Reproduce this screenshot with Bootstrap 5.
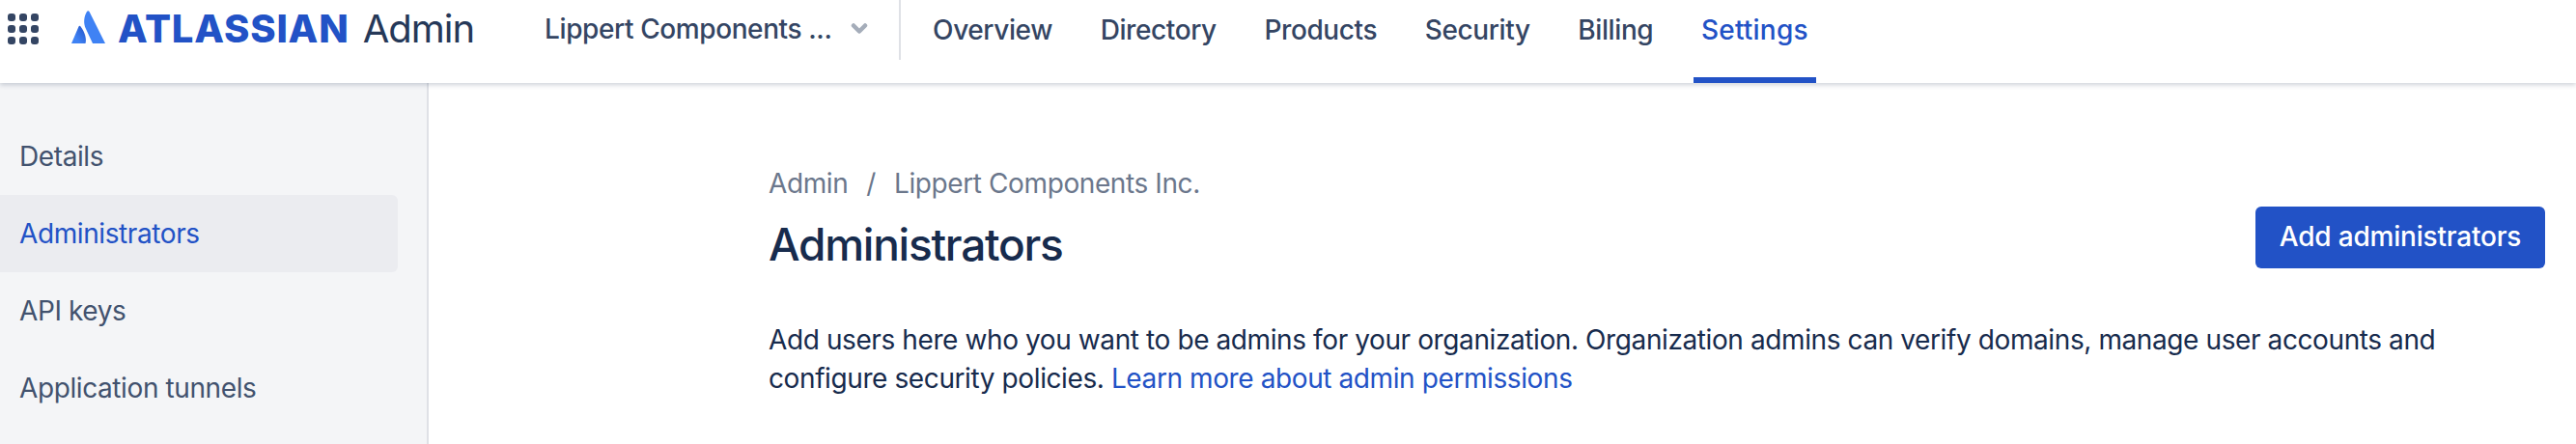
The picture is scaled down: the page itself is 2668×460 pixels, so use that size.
<!DOCTYPE html>
<html lang="en">
<head>
  <meta charset="UTF-8" />
  <meta name="viewport" content="width=device-width, initial-scale=1.0"/>
  <title>Atlassian Admin - Administrators</title>
  <link href="https://cdn.jsdelivr.net/npm/bootstrap@5.3.3/dist/css/bootstrap.min.css" rel="stylesheet">
  <style>
    html, body { height: 100%; margin: 0; overflow: hidden; }
    body { font-family: "Inter", "Liberation Sans", sans-serif; font-size: 28px; letter-spacing: -.4px; color: #172b4d; background: #fff; }

    .top-bar { height: 86px; background: #fff; box-shadow: 0 2px 5px rgba(9,30,66,.2); position: relative; z-index: 2; padding-left: 8px; }
    .brand-row { height: 62px; }
    .app-grid { width: 32px; height: 32px; margin: 0 34px 2px 0; }
    .logo-mark { width: 35px; height: 34px; margin: 0 13px 6px 0; }
    .logo-word { font-weight: 800; font-size: 40px; letter-spacing: .8px; color: #2252c6; line-height: 1; margin-bottom: 2px; }
    .logo-app { font-size: 40px; color: #253858; margin: 0 0 2px 14px; line-height: 1; letter-spacing: -1px; }
    .org-pick { margin-left: 73px; width: 369px; height: 62px; border-right: 2px solid #dfe1e6; color: #344563; font-weight: 500; padding-bottom: 2px; }
    .org-pick svg { width: 18px; height: 14px; margin-left: 19px; }
    .top-links { gap: 33.7px; margin-left: 25px; }
    .top-link { color: #344563; font-weight: 500; text-decoration: none; height: 86px; display: flex; align-items: center; padding: 0 8px 18px; border-bottom: 6px solid transparent; }
    .top-link.on { color: #2252c6; border-bottom-color: #2252c6; letter-spacing: .2px; }

    .page-body { height: calc(100% - 86px); }
    .side-col { width: 444px; background: #f4f5f7; border-right: 2px solid #dfe1e6; padding: 36px 30px 0 0; flex-shrink: 0; }
    .side-link { display: block; height: 80px; line-height: 81px; padding-left: 20px; color: #42526e; text-decoration: none; border-radius: 0 6px 6px 0; }
    .side-link.on { background: #ebecf0; color: #2252c6; }

    .main-col { padding: 84px 32px 0 352px; }
    .crumbs { --bs-breadcrumb-margin-bottom: 0; --bs-breadcrumb-item-padding-x: 19px; --bs-breadcrumb-divider-color: #6b778c; --bs-breadcrumb-item-active-color: #6b778c; line-height: 40px; }
    .crumbs a { color: #6b778c; text-decoration: none; }
    .page-title { font-size: 46px; font-weight: 500; color: #172b4d; letter-spacing: -1.25px; line-height: 56px; margin: 15px 0 0; }
    .add-btn { background: #2252c6; border: 0; color: #fff; font-weight: 500; font-size: 28px; letter-spacing: -.2px; height: 64px; width: 300px; border-radius: 6px; padding: 0 0 3px; margin-top: 44px; }
    .intro { line-height: 40px; margin: 51px 0 0; max-width: 1840px; }
    .intro a { color: #2252c6; text-decoration: none; }
  </style>
</head>
<body>

<!-- Top bar -->
<header class="top-bar d-flex align-items-start">
  <div class="brand-row d-flex align-items-center">
    <svg class="app-grid" viewBox="0 0 32 32" fill="#344563">
      <rect x="0" y="0" width="8" height="8" rx="3"/><rect x="12" y="0" width="8" height="8" rx="3"/><rect x="24" y="0" width="8" height="8" rx="3"/>
      <rect x="0" y="12" width="8" height="8" rx="3"/><rect x="12" y="12" width="8" height="8" rx="3"/><rect x="24" y="12" width="8" height="8" rx="3"/>
      <rect x="0" y="24" width="8" height="8" rx="3"/><rect x="12" y="24" width="8" height="8" rx="3"/><rect x="24" y="24" width="8" height="8" rx="3"/>
    </svg>
    <svg class="logo-mark" viewBox="0 0 35 34">
      <defs>
        <linearGradient id="logoFade" x1="0" y1="1" x2="1" y2="0">
          <stop offset="0.3" stop-color="#3f82f4"/>
          <stop offset="1" stop-color="#2252c6"/>
        </linearGradient>
      </defs>
      <path d="M9.500 16.500C9 15.500 8 15.500 7.500 16.500L0 34H14.500C16 30 14 22 9.500 16.500Z" fill="url(#logoFade)"/>
      <path d="M16 1C13 6 12 13 15 19L22 34H35L18.500 1C18 0 16.500 0 16 1Z" fill="#3f82f4"/>
    </svg>
    <span class="logo-word">ATLASSIAN</span>
    <span class="logo-app">Admin</span>
    <div class="org-pick d-flex align-items-center">
      <span>Lippert Components ...</span>
      <svg viewBox="0 0 18 14"><path d="M3 3.500l6 6 6-6" fill="none" stroke="#a5adba" stroke-width="4.500" stroke-linecap="round" stroke-linejoin="round"/></svg>
    </div>
  </div>
  <nav class="top-links d-flex">
    <a class="top-link" href="#">Overview</a>
    <a class="top-link" href="#">Directory</a>
    <a class="top-link" href="#">Products</a>
    <a class="top-link" href="#">Security</a>
    <a class="top-link" href="#">Billing</a>
    <a class="top-link on" href="#">Settings</a>
  </nav>
</header>

<div class="page-body d-flex">
  <!-- Side menu -->
  <aside class="side-col">
    <a class="side-link" href="#">Details</a>
    <a class="side-link on" href="#">Administrators</a>
    <a class="side-link" href="#">API keys</a>
    <a class="side-link" href="#">Application tunnels</a>
  </aside>

  <!-- Main content -->
  <main class="main-col flex-grow-1">
    <div class="d-flex justify-content-between align-items-start">
      <div>
        <ol class="breadcrumb crumbs">
          <li class="breadcrumb-item"><a href="#">Admin</a></li>
          <li class="breadcrumb-item active">Lippert Components Inc.</li>
        </ol>
        <h1 class="page-title">Administrators</h1>
      </div>
      <button type="button" class="btn add-btn">Add administrators</button>
    </div>
    <p class="intro">Add users here who you want to be admins for your organization. Organization admins can verify domains, manage user accounts and configure security policies. <a href="#">Learn more about admin permissions</a></p>
  </main>
</div>

<script src="https://cdn.jsdelivr.net/npm/bootstrap@5.3.3/dist/js/bootstrap.bundle.min.js"></script>
</body>
</html>
